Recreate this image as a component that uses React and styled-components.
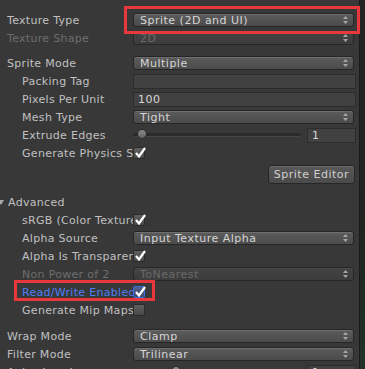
import React from 'react';
import styled, { createGlobalStyle } from 'styled-components';

const GlobalStyle = createGlobalStyle`
  html, body {
    margin: 0;
    padding: 0;
    background: #383838;
  }
  body {
    font-family: "DejaVu Sans", "Liberation Sans", sans-serif;
    font-size: 11px;
  }
`;

const Window = styled.div`
  width: 365px;
  height: 369px;
  overflow: hidden;
  display: flex;
  align-items: flex-start;
  background: #383838;
`;

const Inspector = styled.div`
  position: relative;
  width: 360px;
  padding-top: 11px;
  display: flex;
  flex-direction: column;

  & > * {
    flex-shrink: 0;
  }
`;

const SideStrip = styled.div`
  width: 5px;
  height: 369px;
  border-left: 1px solid #191919;
  background: linear-gradient(180deg, #222323 0%, #212322 55%, #1f2a22 75%, #23332a 100%);
`;

const Row = styled.div`
  height: 18px;
  display: flex;
  align-items: center;
  padding-left: ${(p) => (p.$indent ? 22 : 7)}px;
  padding-right: 3px;
`;

const Label = styled.div`
  width: ${(p) => (p.$indent ? 111 : 126)}px;
  flex: none;
  white-space: nowrap;
  overflow: hidden;
  color: ${(p) => (p.$disabled ? '#6e6e6e' : p.$active ? '#4d7ff2' : '#c0c0c0')};
  letter-spacing: 0.3px;
`;

const Dropdown = styled.div`
  flex: 1;
  height: 14px;
  margin-right: 2px;
  box-sizing: border-box;
  display: flex;
  align-items: center;
  justify-content: space-between;
  padding: 0 5px 0 6px;
  border: 1px solid #262626;
  border-radius: 3px;
  background: ${(p) => (p.$disabled
    ? 'linear-gradient(180deg, #434343 0%, #3c3c3c 100%)'
    : 'linear-gradient(180deg, #5c5c5c 0%, #4b4b4b 100%)')};
  color: ${(p) => (p.$disabled ? '#6a6a6a' : '#d6d6d6')};
  box-shadow: inset 0 1px 0 ${(p) => (p.$disabled ? 'rgba(255,255,255,0.04)' : 'rgba(255,255,255,0.12)')};
  letter-spacing: 0.5px;
`;

const TextField = styled.div`
  flex: 1;
  height: 15px;
  box-sizing: border-box;
  padding-left: 4px;
  display: flex;
  align-items: center;
  background: #414141;
  border: 1px solid #2c2c2c;
  color: #d6d6d6;
  letter-spacing: 0.5px;
`;

const SliderWrap = styled.div`
  flex: 1;
  display: flex;
  align-items: center;
  gap: 6px;
`;

const Track = styled.div`
  position: relative;
  flex: 1;
  height: 3px;
  border-radius: 2px;
  background: #2a2a2a;
  border-bottom: 1px solid #454545;
`;

const Knob = styled.div`
  position: absolute;
  left: ${(p) => p.$left}px;
  top: -4px;
  width: 10px;
  height: 10px;
  border-radius: 50%;
  background: linear-gradient(180deg, #8a8a8a 0%, #626262 100%);
  border: 1px solid #2a2a2a;
  box-sizing: border-box;
`;

const NumberField = styled(TextField)`
  flex: none;
  width: 49px;
`;

const Check = styled.div`
  width: 12px;
  height: 12px;
  box-sizing: border-box;
  border-radius: 2px;
  border: 1px solid ${(p) => (p.$focus ? '#3c6de6' : '#2a2a2a')};
  background: ${(p) => (p.$focus
    ? 'linear-gradient(180deg, #4e5f86 0%, #3d4b70 100%)'
    : 'linear-gradient(180deg, #5e5e5e 0%, #4a4a4a 100%)')};
  position: relative;
  svg {
    position: absolute;
    left: 0px;
    top: -2px;
  }
`;

const ButtonRow = styled.div`
  height: 22px;
  margin-top: 3px;
  display: flex;
  justify-content: flex-end;
  padding-right: 4px;
`;

const Button = styled.div`
  height: 17px;
  padding: 0 5px;
  display: flex;
  align-items: center;
  border: 1px solid #262626;
  border-radius: 3px;
  background: linear-gradient(180deg, #595959 0%, #4a4a4a 100%);
  box-shadow: inset 0 1px 0 rgba(255, 255, 255, 0.1);
  color: #d0d0d0;
  letter-spacing: 0.5px;
`;

const Spacer = styled.div`
  height: ${(p) => p.$h}px;
`;

const Foldout = styled(Row)`
  padding-left: 0;
  gap: 2px;
  color: #c0c0c0;
  letter-spacing: 0.3px;
`;

const Triangle = styled.span`
  width: 0;
  height: 0;
  border-left: 3px solid transparent;
  border-right: 3px solid transparent;
  border-top: 5px solid #a8a8a8;
  margin-left: -2px;
  margin-right: 2px;
`;

const Highlight = styled.div`
  position: absolute;
  left: ${(p) => p.$x}px;
  top: ${(p) => p.$y}px;
  width: ${(p) => p.$w}px;
  height: ${(p) => p.$h}px;
  border: 3px solid #e8383b;
  box-sizing: border-box;
  pointer-events: none;
`;

const Arrows = () => (
  <svg width="5" height="8" viewBox="0 0 5 8">
    <path d="M2.5 0 L5 3 L0 3 Z M0 5 L5 5 L2.5 8 Z" fill="#a6a6a6" />
  </svg>
);

const CheckMark = () => (
  <svg width="13" height="13" viewBox="0 0 13 13">
    <path d="M2 7 L5 10.5 L11 2" fill="none" stroke="#ffffff" strokeWidth="2.2" />
  </svg>
);

const Select = ({ value, disabled }) => (
  <Dropdown $disabled={disabled}>
    <span>{value}</span>
    <Arrows />
  </Dropdown>
);

const Field = ({ label, indent, disabled, active, children }) => (
  <Row $indent={indent}>
    <Label $indent={indent} $disabled={disabled} $active={active}>{label}</Label>
    {children}
  </Row>
);

const Toggle = ({ checked, focus }) => (
  <Check $focus={focus}>{checked && <CheckMark />}</Check>
);

export default function App() {
  return (
    <>
      <GlobalStyle />
      <Window>
        <Inspector>
          <Field label="Texture Type"><Select value="Sprite (2D and UI)" /></Field>
          <Field label="Texture Shape" disabled><Select value="2D" disabled /></Field>
          <Spacer $h={7} />
          <Field label="Sprite Mode"><Select value="Multiple" /></Field>
          <Field label="Packing Tag" indent><TextField /></Field>
          <Field label="Pixels Per Unit" indent><TextField>100</TextField></Field>
          <Field label="Mesh Type" indent><Select value="Tight" /></Field>
          <Field label="Extrude Edges" indent>
            <SliderWrap>
              <Track><Knob $left={4} /></Track>
              <NumberField>1</NumberField>
            </SliderWrap>
          </Field>
          <Field label="Generate Physics Shape" indent><Toggle checked /></Field>
          <ButtonRow><Button>Sprite Editor</Button></ButtonRow>
          <Spacer $h={6} />
          <Foldout><Triangle />Advanced</Foldout>
          <Field label="sRGB (Color Texture)" indent><Toggle checked /></Field>
          <Field label="Alpha Source" indent><Select value="Input Texture Alpha" /></Field>
          <Field label="Alpha Is Transparency" indent><Toggle checked /></Field>
          <Field label="Non Power of 2" indent disabled><Select value="ToNearest" disabled /></Field>
          <Field label="Read/Write Enabled" indent active><Toggle checked focus /></Field>
          <Field label="Generate Mip Maps" indent><Toggle /></Field>
          <Spacer $h={8} />
          <Field label="Wrap Mode"><Select value="Clamp" /></Field>
          <Field label="Filter Mode"><Select value="Trilinear" /></Field>
          <Field label="Aniso Level">
            <SliderWrap>
              <Track><Knob $left={38} /></Track>
              <NumberField>1</NumberField>
            </SliderWrap>
          </Field>
          <Highlight $x={124} $y={6} $w={236} $h={28} />
          <Highlight $x={14} $y={280} $w={141} $h={21} />
        </Inspector>
        <SideStrip />
      </Window>
    </>
  );
}
